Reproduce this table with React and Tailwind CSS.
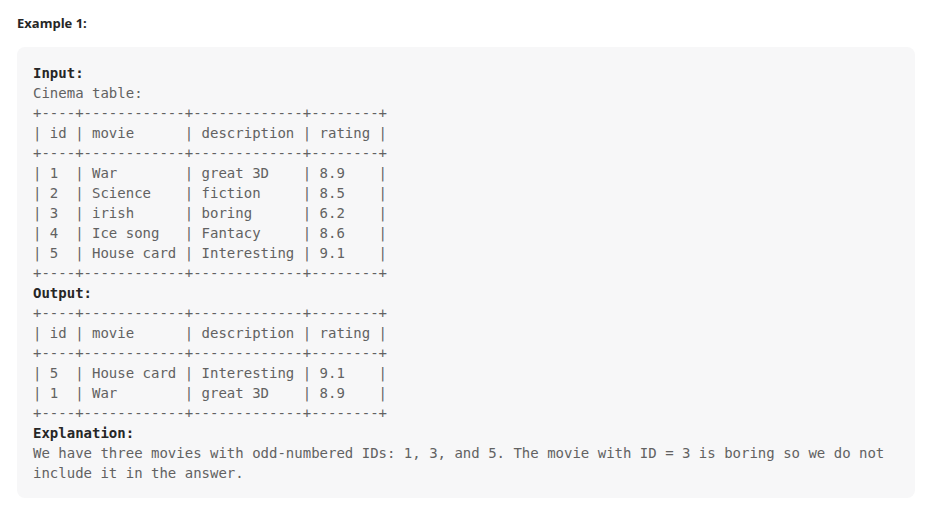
export default function App() {
  const mono = { fontFamily: '"DejaVu Sans Mono", monospace' };
  const lines1 = [
    "+----+------------+-------------+--------+",
    "| id | movie      | description | rating |",
    "+----+------------+-------------+--------+",
    "| 1  | War        | great 3D    | 8.9    |",
    "| 2  | Science    | fiction     | 8.5    |",
    "| 3  | irish      | boring      | 6.2    |",
    "| 4  | Ice song   | Fantacy     | 8.6    |",
    "| 5  | House card | Interesting | 9.1    |",
    "+----+------------+-------------+--------+",
  ];
  const lines2 = [
    "+----+------------+-------------+--------+",
    "| id | movie      | description | rating |",
    "+----+------------+-------------+--------+",
    "| 5  | House card | Interesting | 9.1    |",
    "| 1  | War        | great 3D    | 8.9    |",
    "+----+------------+-------------+--------+",
  ];
  return (
    <div className="bg-white w-[936px] h-[512px] pl-[17px] pt-[14px]">
      <p
        className="text-[13px] font-bold text-[#262626] leading-[18px]"
        style={{ fontFamily: '"Open Sans", "Liberation Sans", sans-serif' }}
      >
        Example 1:
      </p>
      <div className="mt-[15px] w-[898px] rounded-lg bg-[#f7f7f8] px-4 pt-4 pb-[15px]">
        <pre
          className="text-[14px] leading-[20px] text-[#626262] whitespace-pre-wrap m-0"
          style={mono}
        >
          <strong className="font-bold text-[#262626]">Input:</strong>
          {"\nCinema table:\n"}
          {lines1.join("\n")}
          {"\n"}
          <strong className="font-bold text-[#262626]">Output:</strong>
          {"\n"}
          {lines2.join("\n")}
          {"\n"}
          <strong className="font-bold text-[#262626]">Explanation:</strong>
          {"\nWe have three movies with odd-numbered IDs: 1, 3, and 5. The movie with ID = 3 is boring so we do not include it in the answer."}
        </pre>
      </div>
    </div>
  );
}
